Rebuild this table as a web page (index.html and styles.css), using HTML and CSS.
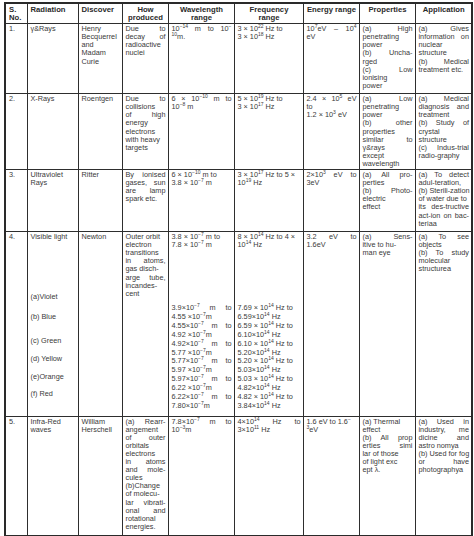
FILE: index.html
```html
<!DOCTYPE html>
<html>
<head>
<meta charset="utf-8">
<link rel="stylesheet" href="styles.css">
</head>
<body>
<table class="em">
<colgroup>
<col class="c1"><col class="c2"><col class="c3"><col class="c4"><col class="c5"><col class="c6"><col class="c7"><col class="c8"><col class="c9">
</colgroup>
<thead>
<tr class="rh">
<th class="l"><div>S.</div><div>No.</div></th>
<th class="l">Radiation</th>
<th class="l">Discover</th>
<th><div>How</div><div>produced</div></th>
<th><div>Wavelength</div><div>range</div></th>
<th><div>Frequency</div><div>range</div></th>
<th>Energy range</th>
<th>Properties</th>
<th>Application</th>
</tr>
</thead>
<tbody>
<tr class="r1">
<td><div>1.</div></td>
<td><div>γ&amp;Rays</div></td>
<td><div>Henry</div><div>Becquerrel</div><div>and</div><div>Madam</div><div>Curie</div></td>
<td><div class="f">Due to</div><div class="f">decay of</div><div>radioactive</div><div>nuclei</div></td>
<td><div class="f">10<sup>−14</sup> m to 10<sup>−</sup></div><div><sup>10</sup>m.</div></td>
<td><div>3 × 10<sup>22</sup> Hz to</div><div>3 × 10<sup>18</sup> Hz</div></td>
<td><div class="f">10<sup>7</sup>eV – 10<sup>4</sup></div><div>eV</div></td>
<td><div class="f">(a) High</div><div>penetrating</div><div>power</div><div class="f">(b) Uncha-</div><div>rged</div><div class="f">(c) Low</div><div>ionising</div><div>power</div></td>
<td><div class="f">(a) Gives</div><div class="f">information on</div><div>nuclear</div><div>structure</div><div class="f">(b) Medical</div><div>treatment etc.</div></td>
</tr>
<tr class="r2">
<td><div>2.</div></td>
<td><div>X-Rays</div></td>
<td><div>Roentgen</div></td>
<td><div class="f">Due to</div><div>collisions</div><div class="f">of high</div><div>energy</div><div>electrons</div><div>with heavy</div><div>targets</div></td>
<td><div class="f">6 × 10<sup>−10</sup> m to</div><div>10<sup>−8</sup> m</div></td>
<td><div>5 × 10<sup>19</sup> Hz to</div><div>3 × 10<sup>17</sup> Hz</div></td>
<td><div class="f">2.4 × 10<sup>5</sup> eV</div><div>to</div><div>1.2 × 10<sup>3</sup> eV</div></td>
<td><div class="f">(a) Low</div><div>penetrating</div><div>power</div><div class="f">(b) other</div><div>properties</div><div class="f">similar to</div><div>γ&amp;rays</div><div>except</div><div>wavelength</div></td>
<td><div class="f">(a) Medical</div><div class="f">diagnosis and</div><div>treatment</div><div class="f">(b) Study of</div><div>crystal</div><div>structure</div><div class="f">(c) Indus-trial</div><div>radio-graphy</div></td>
</tr>
<tr class="r3">
<td><div>3.</div></td>
<td><div>Ultraviolet</div><div>Rays</div></td>
<td><div>Ritter</div></td>
<td><div class="f">By ionised</div><div class="f">gases, sun</div><div class="f">are lamp</div><div>spark etc.</div></td>
<td><div>6 × 10<sup>−10</sup> m to</div><div>3.8 × 10<sup>−7</sup> m</div></td>
<td><div>3 × 10<sup>17</sup> Hz to 5 ×</div><div>10<sup>19</sup> Hz</div></td>
<td><div class="f">2×10<sup>3</sup> eV to</div><div>3eV</div></td>
<td><div class="f">(a) All pro-</div><div>perties</div><div class="f">(b) Photo-</div><div>electric</div><div>effect</div></td>
<td><div class="f">(a) To detect</div><div>adul-teration,</div><div>(b) Sterili-zation</div><div>of water due to</div><div class="f">its des-tructive</div><div class="f">act-ion on bac-</div><div>teriaa</div></td>
</tr>
<tr class="r4">
<td><div>4.</div></td>
<td>
<div>Visible light</div>
<div class="v1">(a)Violet</div>
<div class="v2">(b) Blue</div>
<div class="v3">(c) Green</div>
<div class="v4">(d) Yellow</div>
<div class="v5">(e)Orange</div>
<div class="v6">(f) Red</div>
</td>
<td><div>Newton</div></td>
<td><div>Outer orbit</div><div>electron</div><div>transitions</div><div class="f">in atoms,</div><div>gas disch-</div><div class="f">arge tube,</div><div>incandes-</div><div>cent</div></td>
<td>
<div>3.8 × 10<sup>−7</sup> m to</div><div>7.8 × 10<sup>−7</sup> m</div>
<div class="grp">
<div class="f">3.9×10<sup>−7</sup> m to</div><div>4.55 ×10<sup>−7</sup>m</div>
<div class="f">4.55×10<sup>−7</sup> m to</div><div>4.92 ×10<sup>−7</sup>m</div>
<div class="f">4.92×10<sup>−7</sup> m to</div><div>5.77 ×10<sup>−7</sup>m</div>
<div class="f">5.77×10<sup>−7</sup> m to</div><div>5.97 ×10<sup>−7</sup>m</div>
<div class="f">5.97×10<sup>−7</sup> m to</div><div>6.22 ×10<sup>−7</sup>m</div>
<div class="f">6.22×10<sup>−7</sup> m to</div><div>7.80×10<sup>−7</sup>m</div>
</div>
</td>
<td>
<div>8 × 10<sup>14</sup> Hz to 4 ×</div><div>10<sup>14</sup> Hz</div>
<div class="grp">
<div>7.69 × 10<sup>14</sup> Hz to</div><div>6.59×10<sup>14</sup> Hz</div>
<div>6.59 × 10<sup>14</sup> Hz to</div><div>6.10×10<sup>14</sup> Hz</div>
<div>6.10 × 10<sup>14</sup> Hz to</div><div>5.20×10<sup>14</sup> Hz</div>
<div>5.20 × 10<sup>14</sup> Hz to</div><div>5.03×10<sup>14</sup> Hz</div>
<div>5.03 × 10<sup>14</sup> Hz to</div><div>4.82×10<sup>14</sup> Hz</div>
<div>4.82 × 10<sup>14</sup> Hz to</div><div>3.84×10<sup>14</sup> Hz</div>
</div>
</td>
<td><div class="f">3.2 eV to</div><div>1.6eV</div></td>
<td><div class="f">(a) Sens-</div><div>itive to hu-</div><div>man eye</div></td>
<td><div class="f">(a) To see</div><div>objects</div><div class="f">(b) To study</div><div>molecular</div><div>structurea</div></td>
</tr>
<tr class="r5">
<td><div>5.</div></td>
<td><div>Infra-Red</div><div>waves</div></td>
<td><div>William</div><div>Herschell</div></td>
<td><div class="f">(a) Rearr-</div><div>angement</div><div class="f">of outer</div><div>orbitals</div><div>electrons</div><div class="f">in atoms</div><div class="f">and mole-</div><div>cules</div><div>(b)Change</div><div>of molecu-</div><div class="f">lar vibrati-</div><div class="f">onal and</div><div>rotational</div><div>energies.</div></td>
<td><div class="f">7.8×10<sup>−7</sup> m to</div><div>10<sup>−3</sup>m</div></td>
<td><div class="f">4×10<sup>14</sup> Hz to</div><div>3×10<sup>11</sup> Hz</div></td>
<td><div>1.6 eV to 1.6<sup>−</sup></div><div><sup>3</sup>eV</div></td>
<td><div>(a) Thermal</div><div>effect</div><div class="f">(b) All prop</div><div class="f">erties simi</div><div>lar of those</div><div>of light exc</div><div>ept λ.</div></td>
<td><div class="f">(a) Used in</div><div class="f">industry, me</div><div class="f">dicine and</div><div>astro nomya</div><div>(b) Used for fog</div><div class="f">or have</div><div>photographya</div></td>
</tr>
</tbody>
</table>
</body>
</html>
```

FILE: styles.css
```css
html, body {
  margin: 0;
  padding: 0;
  background: #ffffff;
}
body {
  font-family: "Liberation Sans", Arial, sans-serif;
  color: #3a3a3a;
}
.em {
  margin: 2px 0 0 4px;
  border-collapse: collapse;
  table-layout: fixed;
  width: 467px;
  border: 2px solid #2a2a2a;
  font-size: 7.3px;
  line-height: 8.2px;
}
.c1 { width: 22px; }
.c2 { width: 51px; }
.c3 { width: 44px; }
.c4 { width: 46px; }
.c5 { width: 66px; }
.c6 { width: 69px; }
.c7 { width: 56px; }
.c8 { width: 56px; }
.c9 { width: 57px; }
th, td {
  border: 1px solid #2e2e2e;
  vertical-align: top;
  padding: 1px 2px 0 3px;
  overflow: hidden;
}
th {
  font-weight: bold;
  text-align: center;
  color: #2a2a2a;
  font-size: 7.7px;
  line-height: 8.4px;
  padding-top: 2px;
}
th.l { text-align: left; }
td { text-align: left; }
td div { white-space: nowrap; }
td div.f {
  white-space: normal;
  text-align: justify;
  text-align-last: justify;
}
sup {
  font-size: 5px;
  line-height: 0;
  vertical-align: 3px;
}
.rh { height: 20px; }
.r1 { height: 70px; }
.r2 { height: 75px; }
.r3 { height: 62px; }
.r4 { height: 185px; }
.r5 { height: 120px; }
.r5 td { line-height: 8.1px; }
.v1 { margin-top: 52px; }
.v2 { margin-top: 12px; }
.v3 { margin-top: 16px; }
.v4 { margin-top: 10px; }
.v5 { margin-top: 9px; }
.v6 { margin-top: 9px; }
.grp {
  margin-top: 55px;
  line-height: 8.9px;
}
```
